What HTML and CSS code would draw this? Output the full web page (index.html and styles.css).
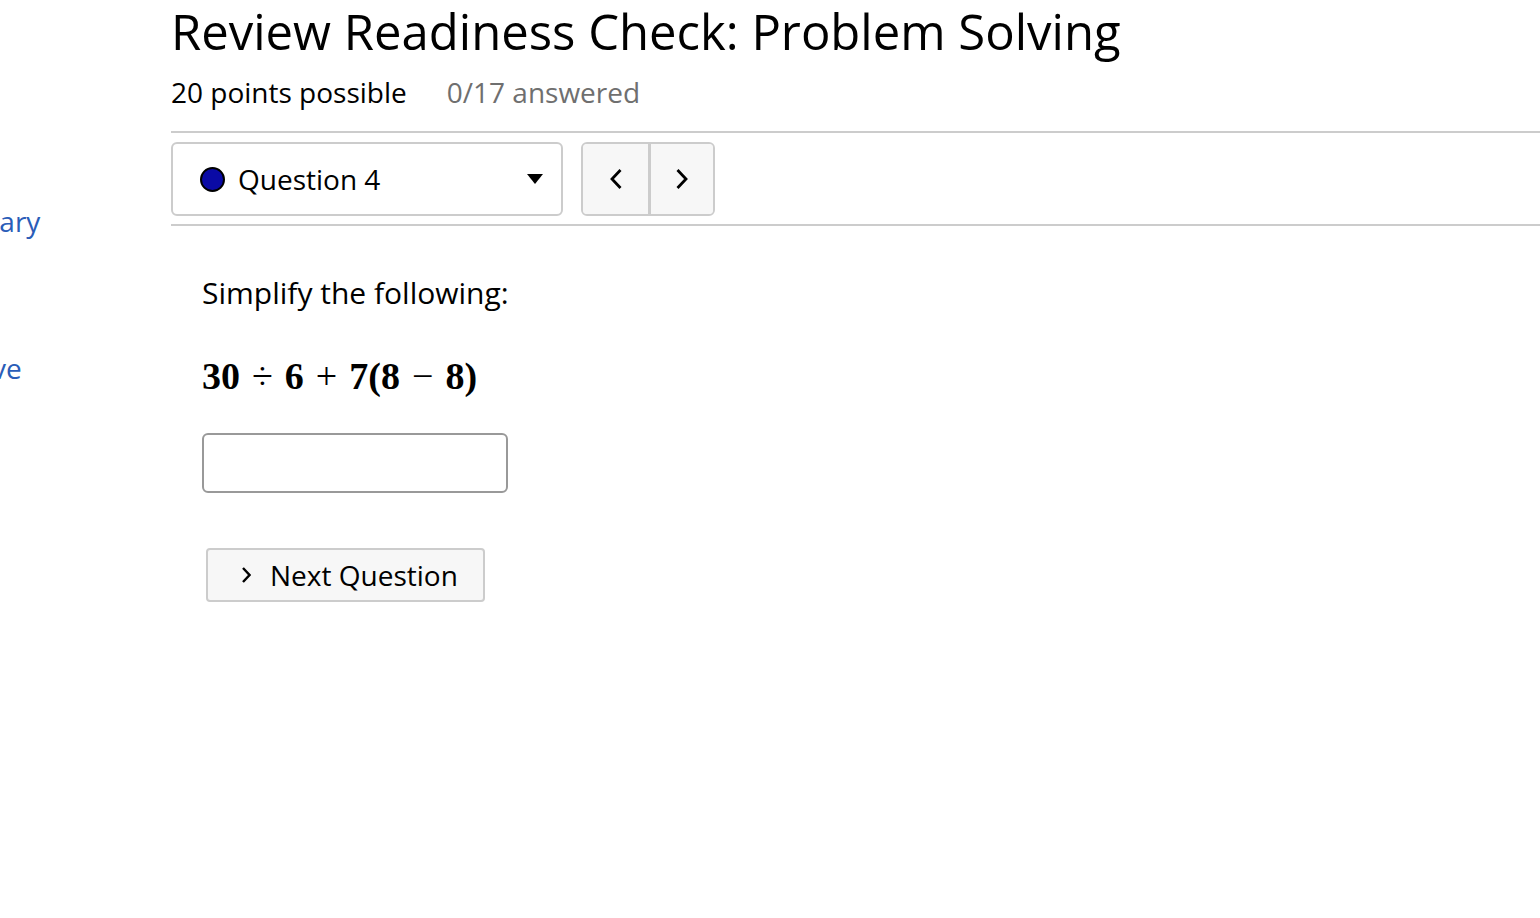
FILE: index.html
```html
<!DOCTYPE html>
<html>
<head>
<meta charset="utf-8">
<link rel="stylesheet" href="styles.css">
</head>
<body>
<div class="page">
  <nav class="sidebar">
    <a class="side-link side-summary" href="#">Summary</a>
    <a class="side-link side-leave" href="#">Leave</a>
  </nav>
  <main class="main">
    <h1 class="title">Review Readiness Check: Problem Solving</h1>
    <div class="meta">
      <span class="points">20 points possible</span>
      <span class="answered">0/17 answered</span>
    </div>
    <div class="toolbar">
      <div class="select">
        <span class="dot"></span>
        <span class="select-label">Question 4</span>
        <span class="caret"></span>
      </div>
      <div class="pager">
        <button class="pager-btn" aria-label="Previous">
          <svg width="14" height="22" viewBox="0 0 14 22"><path d="M11.5 2 L3 11 L11.5 20" fill="none" stroke="#000" stroke-width="2.8"/></svg>
        </button>
        <button class="pager-btn pager-next" aria-label="Next">
          <svg width="14" height="22" viewBox="0 0 14 22"><path d="M2.5 2 L11 11 L2.5 20" fill="none" stroke="#000" stroke-width="2.8"/></svg>
        </button>
      </div>
    </div>
    <section class="question">
      <p class="prompt">Simplify the following:</p>
      <p class="math"><span class="num">30</span><span class="op">÷</span><span class="num">6</span><span class="op">+</span><span class="num">7(8</span><span class="op">−</span><span class="num">8)</span></p>
      <input class="answer" type="text">
      <div class="actions">
        <button class="next-btn">
          <svg width="10" height="18" viewBox="0 0 10 18"><path d="M2 2 L8.5 9 L2 16" fill="none" stroke="#000" stroke-width="2.4"/></svg>
          <span>Next Question</span>
        </button>
      </div>
    </section>
  </main>
</div>
</body>
</html>
```
FILE: styles.css
```css
html, body {
  margin: 0;
  padding: 0;
  background: #fff;
  font-family: "Open Sans", "Noto Sans", sans-serif;
  color: #000;
}
.page {
  display: flex;
  width: 1540px;
  height: 918px;
  overflow: hidden;
}
.sidebar {
  width: 171px;
  flex: none;
  display: flex;
  flex-direction: column;
  overflow: hidden;
  padding-top: 202px;
}
.side-link {
  color: #2a5db8;
  text-decoration: none;
  font-size: 28px;
  line-height: 38px;
  white-space: nowrap;
}
.side-summary {
  margin-left: -85px;
}
.side-leave {
  margin-top: 109px;
  margin-left: -54px;
}
.main {
  flex: 1;
  min-width: 0;
}
.title {
  margin: 0;
  font-weight: 400;
  font-size: 49px;
  line-height: 62px;
  white-space: nowrap;
}
.meta {
  display: flex;
  gap: 40px;
  font-size: 28px;
  line-height: 38px;
  margin-top: 11px;
  padding-bottom: 20px;
  border-bottom: 2px solid #cccccc;
}
.answered {
  color: #6f6f6f;
}
.toolbar {
  display: flex;
  gap: 18px;
  padding: 9px 0 8px;
  border-bottom: 2px solid #cccccc;
}
.select {
  height: 70px;
  border: 2px solid #cccccc;
  border-radius: 6px;
  display: flex;
  align-items: center;
  padding: 0 18px 0 27px;
  box-sizing: content-box;
  width: 343px;
}
.dot {
  width: 21px;
  height: 21px;
  border-radius: 50%;
  background: #0a0aa5;
  border: 2px solid #000;
  flex: none;
}
.select-label {
  margin-left: 13px;
  font-size: 28px;
  flex: 1;
}
.caret {
  width: 0;
  height: 0;
  border-left: 8px solid transparent;
  border-right: 8px solid transparent;
  border-top: 10px solid #000;
}
.pager {
  display: flex;
  border: 2px solid #cccccc;
  border-radius: 6px;
  background: #f7f7f7;
  overflow: hidden;
}
.pager-btn {
  width: 65px;
  height: 70px;
  border: 0;
  background: #f7f7f7;
  display: flex;
  align-items: center;
  justify-content: center;
  padding: 0;
}
.pager-next {
  border-left: 3px solid #cccccc;
}
.question {
  padding: 47px 0 0 31px;
}
.prompt {
  margin: 0;
  font-size: 30px;
  line-height: 40px;
}
.math {
  margin: 42px 0 0;
  display: flex;
  align-items: baseline;
  font-family: "Liberation Serif", "DejaVu Serif", serif;
  font-size: 38px;
  line-height: 42px;
}
.num {
  font-weight: 700;
}
.op {
  margin: 0 12px;
}
.answer {
  display: block;
  margin: 36px 0 0;
  width: 302px;
  height: 56px;
  border: 2px solid #999999;
  border-radius: 6px;
  padding: 0;
  font-size: 24px;
  box-sizing: content-box;
}
.actions {
  padding: 55px 0 0 4px;
}
.next-btn {
  display: flex;
  align-items: center;
  gap: 19px;
  height: 54px;
  padding: 0 25px 0 33px;
  border: 2px solid #cccccc;
  border-radius: 4px;
  background: #f7f7f7;
  font-family: "Open Sans", sans-serif;
  font-size: 28px;
  color: #000;
}
```
